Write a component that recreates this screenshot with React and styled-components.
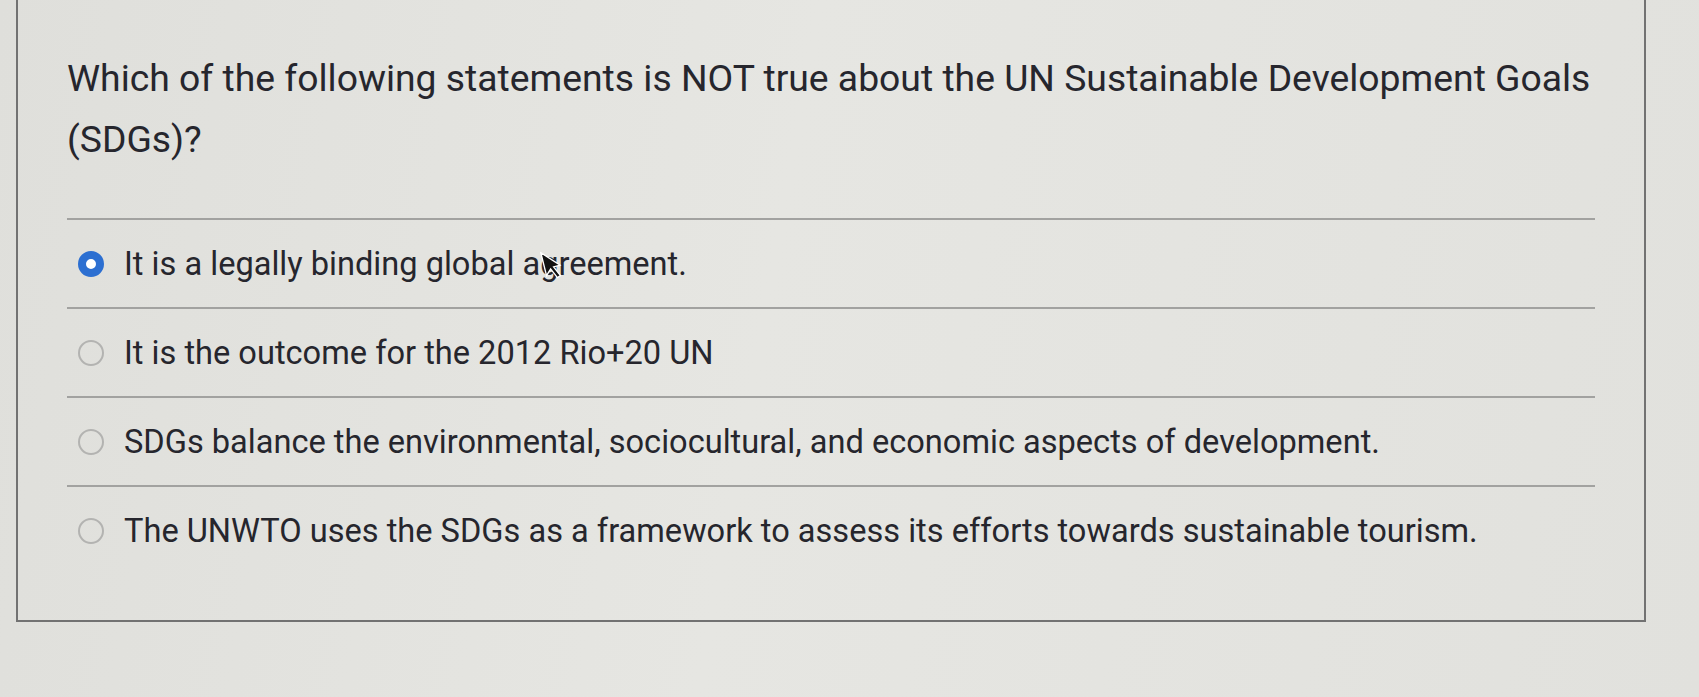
import React from "react";
import styled, { createGlobalStyle } from "styled-components";

const GlobalStyle = createGlobalStyle`
  html, body {
    margin: 0;
    padding: 0;
    background: #e2e2de;
    font-family: Roboto, "Liberation Sans", sans-serif;
    color: #26262d;
  }
`;

const Page = styled.div`
  width: 1699px;
  height: 697px;
  overflow: hidden;
  background: linear-gradient(100deg, #dfdfdb 0%, #e6e6e2 45%, #e1e1dd 100%);
`;

const Card = styled.div`
  box-sizing: border-box;
  margin-left: 16px;
  width: 1630px;
  border: 2px solid #727272;
  border-top: none;
  padding: 48px 49px 46px 49px;
`;

const Question = styled.div`
  font-size: 37.3px;
  line-height: 61px;
  margin-right: -30px;
  white-space: nowrap;
`;

const Options = styled.div`
  margin-top: 48px;
`;

const Option = styled.label`
  box-sizing: border-box;
  height: 89px;
  display: flex;
  align-items: center;
  gap: 20px;
  border-top: 2px solid #a2a2a0;
  padding-left: 11px;
  font-size: 32.6px;
`;

const Radio = styled.span`
  box-sizing: border-box;
  flex: none;
  width: 26px;
  height: 26px;
  border-radius: 50%;
  background: ${(p) => (p.checked ? "#fff" : "transparent")};
  border: ${(p) => (p.checked ? "8px solid #2c6fd1" : "2px solid #b3b3b1")};
`;

const CursorSpot = styled.span`
  position: relative;
`;

const Cursor = styled.svg`
  position: absolute;
  left: 3px;
  top: 4px;
  width: 18px;
  height: 32px;
  transform: rotate(-14deg);
`;

const options = [
  "It is a legally binding global agreement.",
  "It is the outcome for the 2012 Rio+20 UN",
  "SDGs balance the environmental, sociocultural, and economic aspects of development.",
  "The UNWTO uses the SDGs as a framework to assess its efforts towards sustainable tourism.",
];

const App = () => {
  return (
    <Page>
      <GlobalStyle />
      <Card>
        <Question>
          Which of the following statements is NOT true about the UN Sustainable
          Development Goals
          <br />
          (SDGs)?
        </Question>
        <Options>
          {options.map((text, i) => (
            <Option key={i}>
              <Radio checked={i === 0} />
              {i === 0 ? (
                <span>
                  It is a legally binding global a
                  <CursorSpot>
                    g
                    <Cursor viewBox="0 0 16 28">
                      <path
                        d="M1 1 L1 22 L6 17 L10 26 L13 25 L9 16 L15 16 Z"
                        fill="#111"
                        stroke="#fff"
                        strokeWidth="1.2"
                      />
                    </Cursor>
                  </CursorSpot>
                  reement.
                </span>
              ) : (
                <span>{text}</span>
              )}
            </Option>
          ))}
        </Options>
      </Card>
    </Page>
  );
};

export default App;
